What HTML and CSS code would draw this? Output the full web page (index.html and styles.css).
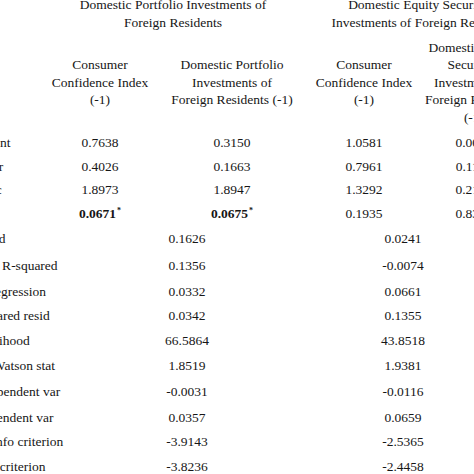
FILE: index.html
```html
<!DOCTYPE html>
<html lang="en">
<head>
<meta charset="utf-8">
<title>Regression results</title>
<link rel="stylesheet" href="styles.css">
</head>
<body>
<div class="table">
  <div class="cell"></div>
  <div class="cell group group-a">Domestic Portfolio Investments of<br>Foreign Residents</div>
  <div class="cell group group-b">Domestic Equity Securities<br>Investments of Foreign Residents</div>

  <div class="cell"></div>
  <div class="cell head">Consumer<br>Confidence Index<br>(-1)</div>
  <div class="cell head">Domestic Portfolio<br>Investments of<br>Foreign Residents (-1)</div>
  <div class="cell head">Consumer<br>Confidence Index<br>(-1)</div>
  <div class="cell head">Domestic Equity<br>Securities<br>Investments of<br>Foreign Residents<br>(-1)</div>

  <div class="cell label">Coefficient</div>
  <div class="cell">0.7638</div>
  <div class="cell">0.3150</div>
  <div class="cell">1.0581</div>
  <div class="cell">0.0025</div>

  <div class="cell label">Std. Error</div>
  <div class="cell">0.4026</div>
  <div class="cell">0.1663</div>
  <div class="cell">0.7961</div>
  <div class="cell">0.1174</div>

  <div class="cell label">t-Statistic</div>
  <div class="cell">1.8973</div>
  <div class="cell">1.8947</div>
  <div class="cell">1.3292</div>
  <div class="cell">0.2154</div>

  <div class="cell label">Prob.</div>
  <div class="cell"><b>0.0671<span class="star">*</span></b></div>
  <div class="cell"><b>0.0675<span class="star">*</span></b></div>
  <div class="cell">0.1935</div>
  <div class="cell">0.8306</div>

  <div class="cell label">R-squared</div>
  <div class="cell span-a">0.1626</div>
  <div class="cell span-b">0.0241</div>

  <div class="cell label">Adjusted R-squared</div>
  <div class="cell span-a">0.1356</div>
  <div class="cell span-b">-0.0074</div>

  <div class="cell label">S.E. of regression</div>
  <div class="cell span-a">0.0332</div>
  <div class="cell span-b">0.0661</div>

  <div class="cell label">Sum squared resid</div>
  <div class="cell span-a">0.0342</div>
  <div class="cell span-b">0.1355</div>

  <div class="cell label">Log likelihood</div>
  <div class="cell span-a">66.5864</div>
  <div class="cell span-b">43.8518</div>

  <div class="cell label">Durbin-Watson stat</div>
  <div class="cell span-a">1.8519</div>
  <div class="cell span-b">1.9381</div>

  <div class="cell label">Mean dependent var</div>
  <div class="cell span-a">-0.0031</div>
  <div class="cell span-b">-0.0116</div>

  <div class="cell label">S.D. dependent var</div>
  <div class="cell span-a">0.0357</div>
  <div class="cell span-b">0.0659</div>

  <div class="cell label">Akaike info criterion</div>
  <div class="cell span-a">-3.9143</div>
  <div class="cell span-b">-2.5365</div>

  <div class="cell label">Schwarz criterion</div>
  <div class="cell span-a">-3.8236</div>
  <div class="cell span-b">-2.4458</div>
</div>
</body>
</html>
```

FILE: styles.css
```css
html, body {
  margin: 0;
  padding: 0;
  overflow: hidden;
  background: #ffffff;
}

body {
  width: 474px;
  height: 474px;
  font-family: "Liberation Serif", "Times New Roman", serif;
  font-size: 13.5px;
  color: #161616;
}

.table {
  display: grid;
  width: max-content;
  margin: -4px 0 0 -50px;
  grid-template-columns: 84px 132px 132px 132px 88px;
  grid-template-rows:
    38px 97px
    23.5px 23.5px 23.5px 23.5px 26.5px
    27.5px 25px 24px 24.5px 26.5px
    26px 24.5px 25px 25px;
}

.cell {
  display: flex;
  align-items: center;
  justify-content: center;
  text-align: center;
  white-space: nowrap;
  line-height: 17.5px;
}

.group {
  grid-column: span 2;
  align-items: flex-start;
}

.group-a {
  padding-left: 14px;
}

.group-b {
  padding-left: 28px;
}

.label {
  justify-content: flex-start;
  text-align: left;
}

.span-a {
  grid-column: span 2;
  padding-left: 42px;
}

.span-b {
  grid-column: span 2;
  padding-right: 10px;
}

b {
  font-weight: bold;
}

.star {
  font-size: 8px;
  line-height: 0;
  vertical-align: 5px;
  margin-left: 1px;
}
```
